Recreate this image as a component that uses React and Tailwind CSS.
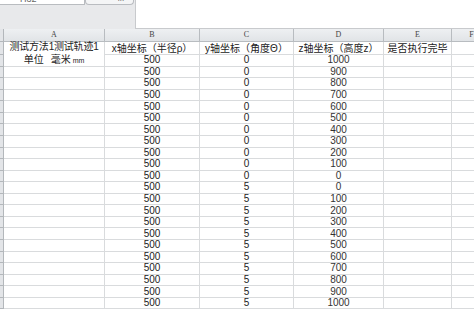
import React from "react";

const cjk = { fontFamily: '"Liberation Sans", "Noto Sans CJK SC", sans-serif' };

export default function App() {
  const dVals = [1000, 900, 800, 700, 600, 500, 400, 300, 200, 100, 0, 0, 100, 200, 300, 400, 500, 600, 700, 800, 900, 1000];
  const rows = dVals.map((d, i) => ({ b: 500, c: i < 11 ? 0 : 5, d }));
  const cols = ["A", "B", "C", "D", "E", "F"];
  const cell = "border-r border-b border-[#d9dbdd] flex items-center justify-center overflow-visible whitespace-nowrap";

  return (
    <div className="w-[474px] h-[311px] overflow-hidden bg-white text-[#222]" style={cjk}>
      {/* top toolbar */}
      <div className="flex h-[29px]">
        <div className="w-[136px] h-full bg-[#e8e9eb] border-r border-[#c8cacd] flex flex-col">
          <div className="flex h-[5px]">
            <div className="w-[85px] h-full bg-white border-b border-r border-[#b9bcc0] overflow-hidden relative">
              <span className="absolute left-[20px] top-[-6px] text-[9px] leading-[10px] text-[#666]">H32</span>
            </div>
            <div className="w-[49px] h-full bg-[#f4f5f6] border-b border-l border-r border-[#b9bcc0] rounded-b-[4px] overflow-hidden relative">
              <span className="absolute left-[32px] top-[-6px] text-[8px] leading-[10px] italic text-[#666]">fx</span>
            </div>
          </div>
        </div>
        <div className="flex-1 h-full bg-white border-b border-[#c8cacd]"></div>
      </div>

      {/* sheet grid */}
      <div
        className="grid w-[500px]"
        style={{
          gridTemplateColumns: "4px 101px 95px 94px 90px 68px 40px",
          gridTemplateRows: `13px 13px repeat(${rows.length}, 11.57px)`,
        }}
      >
        {/* header row */}
        <div className="bg-[#e3e5e8] border-r border-b border-[#b3b7bb]"></div>
        {cols.map((c) => (
          <div
            key={c}
            className="bg-gradient-to-b from-[#eef0f2] to-[#e1e4e7] border-r border-b border-[#b8bcc0] flex items-center justify-center text-[8px] text-[#444]"
            style={{ fontFamily: '"Liberation Serif", serif' }}
          >
            {c}
          </div>
        ))}

        {/* row 1 */}
        <div className="bg-[#e3e5e8] border-r border-b border-[#b3b7bb]"></div>
        <div className="row-span-2 border-r border-b border-[#d9dbdd] flex flex-col items-center justify-center text-[10px] leading-[13px] whitespace-nowrap">
          <span className="tracking-[-0.2px]">测试方法1测试轨迹1</span>
          <span className="flex items-baseline">
            <span className="mr-[7px]">单位</span>
            <span>毫米</span>
            <span className="text-[7px] ml-[2px]">mm</span>
          </span>
        </div>
        <div className={cell + " text-[10px]"}>x轴坐标（半径ρ）</div>
        <div className={cell + " text-[10px]"}>y轴坐标（角度Θ）</div>
        <div className={cell + " text-[10px]"}>z轴坐标（高度z）</div>
        <div className={cell + " text-[10px]"}>是否执行完毕</div>
        <div className={cell}></div>

        {rows.map((r, i) => (
          <React.Fragment key={i}>
            <div className="bg-[#e3e5e8] border-r border-b border-[#b3b7bb]"></div>
            {i > 0 && <div className={cell}></div>}
            <div className={cell + " text-[10px] leading-none"}>{r.b}</div>
            <div className={cell + " text-[10px] leading-none"}>{r.c}</div>
            <div className={cell + " text-[10px] leading-none text-[#333]"}>{r.d}</div>
            <div className={cell}></div>
            <div className={cell}></div>
          </React.Fragment>
        ))}
      </div>
    </div>
  );
}
